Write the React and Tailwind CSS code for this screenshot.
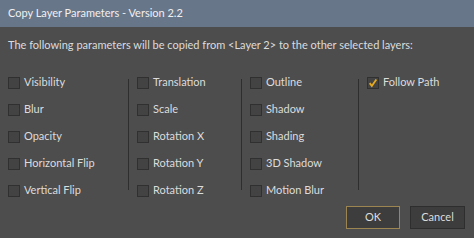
import React from 'react';

const columns = [
  ['Visibility', 'Blur', 'Opacity', 'Horizontal Flip', 'Vertical Flip'],
  ['Translation', 'Scale', 'Rotation X', 'Rotation Y', 'Rotation Z'],
  ['Outline', 'Shadow', 'Shading', '3D Shadow', 'Motion Blur'],
  ['Follow Path'],
];

const widths = ['w-[120px]', 'w-[104px]', 'w-[108px]', 'w-[100px]'];

function Check({ label, checked }) {
  return (
    <div className="flex items-center h-[27px]">
      <div className="w-[12px] h-[12px] bg-[#434343] border border-[#303030] flex items-center justify-center">
        {checked && (
          <svg width="12" height="12" viewBox="0 0 12 12">
            <path d="M2 6.2 L4.6 9.5 L10 1.8" fill="none" stroke="#e3aa22" strokeWidth="2.2" />
          </svg>
        )}
      </div>
      <span className="ml-[4px] text-[11px] text-[#dcdcdc]">{label}</span>
    </div>
  );
}

export default function App() {
  return (
    <div className="w-[474px] h-[238px] bg-[#4d4d4d] flex flex-col" style={{ fontFamily: 'Lato, "Noto Sans", sans-serif' }}>
      <div className="h-[27px] shrink-0 bg-[#687689] flex items-center pl-[8px] text-[11px] text-[#f0f0f0]">
        Copy Layer Parameters - Version 2.2
      </div>
      <div className="pl-[8px] pt-[10px] text-[11px] text-[#dcdcdc] leading-[16px] whitespace-nowrap">
        The following parameters will be copied from &lt;Layer 2&gt; to the other selected layers:
      </div>
      <div className="flex pl-[8px] mt-[16px]">
        {columns.map((col, i) => (
          <div key={i} className="flex">
            {i > 0 && <div className="w-px bg-[#2e2e2e] mt-[10px] h-[111px] mr-[8px]" />}
            <div className={`flex flex-col ${widths[i]}`}>
              {col.map((label) => (
                <Check key={label} label={label} checked={label === 'Follow Path'} />
              ))}
            </div>
          </div>
        ))}
      </div>
      <div className="flex justify-end gap-[10px] pr-[9px] mt-[2px]">
        <button className="w-[54px] h-[23px] bg-[#3d3d3d] border border-[#9c8550] text-[11px] text-[#dcdcdc]">OK</button>
        <button className="w-[55px] h-[23px] bg-[#3d3d3d] border border-[#2e2e2e] text-[11px] text-[#dcdcdc]">Cancel</button>
      </div>
    </div>
  );
}
